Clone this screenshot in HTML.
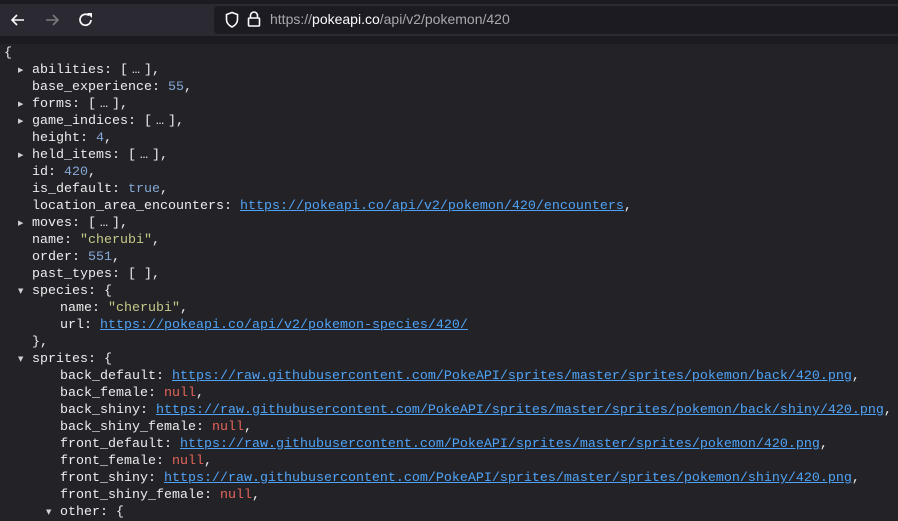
<!DOCTYPE html>
<html><head><meta charset="utf-8"><style>
*{margin:0;padding:0;box-sizing:border-box}
body{width:898px;height:513px;overflow:hidden;background:#232327;font-family:"Liberation Sans",sans-serif}
.top{position:absolute;left:0;top:0;width:898px;height:4px;background:#1c1b22}
.bar{position:absolute;left:0;top:4px;width:898px;height:32px;background:#2b2a33}
.sep{position:absolute;left:0;top:36px;width:898px;height:8px;background:#1c1b22}
.url{position:absolute;left:214px;top:6px;width:690px;height:28px;background:#1c1b22;border-radius:4px}
.urltext{position:absolute;left:270px;top:11px;font-size:14px;color:#a8a8ad}
.urltext b{font-weight:normal;color:#fbfbfe}
.code{position:absolute;left:0;top:45px;font-family:"Liberation Mono",monospace;font-size:13.33px;color:#ededf0}
.l{position:absolute;height:17px;line-height:17px;white-space:pre}
.n{color:#86a8d6}.s{color:#c7c98a}.nl{color:#e5645a}.a{color:#4fa3f7;text-decoration:underline}
.t{position:absolute;font-size:7px;color:#cfcfd4;font-family:"DejaVu Sans",sans-serif}
.h{letter-spacing:-4px}
</style></head><body>
<div class="top"></div><div class="bar"></div><div class="sep"></div>
<svg style="position:absolute;left:8px;top:10px" width="20" height="20" viewBox="0 0 20 20"><path d="M16 10H4M9 5L4 10L9 15" stroke="#fbfbfe" stroke-width="1.6" fill="none"/></svg>
<svg style="position:absolute;left:42px;top:10px" width="20" height="20" viewBox="0 0 20 20"><path d="M4 10H16M11 5L16 10L11 15" stroke="#7a7a80" stroke-width="1.6" fill="none"/></svg>
<svg style="position:absolute;left:76px;top:10px" width="20" height="20" viewBox="0 0 20 20"><path d="M15 10A5.5 5.5 0 1 1 13 5.5" stroke="#fbfbfe" stroke-width="1.7" fill="none"/><path d="M11 3H16V8Z" fill="#fbfbfe"/></svg>
<div class="url"></div>
<svg style="position:absolute;left:224px;top:11px" width="16" height="18" viewBox="0 0 16 18"><path d="M8 1.5L2.5 3.5V8.5C2.5 12 5 14.5 8 16C11 14.5 13.5 12 13.5 8.5V3.5Z" stroke="#fbfbfe" stroke-width="1.6" fill="none"/></svg>
<svg style="position:absolute;left:246px;top:10px" width="16" height="18" viewBox="0 0 16 18"><path d="M4.5 8V5.5A3.5 3.5 0 0 1 11.5 5.5V8" stroke="#fbfbfe" stroke-width="1.6" fill="none"/><rect x="2.5" y="8" width="11" height="8" rx="1" stroke="#fbfbfe" stroke-width="1.6" fill="none"/></svg>
<div class="urltext">https://<b>pokeapi.co</b>/api/v2/pokemon/420</div>
<div class="code">
<div class="l" style="left:4px;top:0">{</div>
<div class="t" style="left:18px;top:21px">▶</div><div class="l" style="left:32px;top:17px">abilities: [<span class="h"> </span>…<span class="h"> </span>],</div>
<div class="l" style="left:32px;top:34px">base_experience: <span class="n">55</span>,</div>
<div class="t" style="left:18px;top:55px">▶</div><div class="l" style="left:32px;top:51px">forms: [<span class="h"> </span>…<span class="h"> </span>],</div>
<div class="t" style="left:18px;top:72px">▶</div><div class="l" style="left:32px;top:68px">game_indices: [<span class="h"> </span>…<span class="h"> </span>],</div>
<div class="l" style="left:32px;top:85px">height: <span class="n">4</span>,</div>
<div class="t" style="left:18px;top:106px">▶</div><div class="l" style="left:32px;top:102px">held_items: [<span class="h"> </span>…<span class="h"> </span>],</div>
<div class="l" style="left:32px;top:119px">id: <span class="n">420</span>,</div>
<div class="l" style="left:32px;top:136px">is_default: <span class="n">true</span>,</div>
<div class="l" style="left:32px;top:153px">location_area_encounters: <span class="a">https://pokeapi.co/api/v2/pokemon/420/encounters</span>,</div>
<div class="t" style="left:18px;top:174px">▶</div><div class="l" style="left:32px;top:170px">moves: [<span class="h"> </span>…<span class="h"> </span>],</div>
<div class="l" style="left:32px;top:187px">name: <span class="s">"cherubi"</span>,</div>
<div class="l" style="left:32px;top:204px">order: <span class="n">551</span>,</div>
<div class="l" style="left:32px;top:221px">past_types: [ ],</div>
<div class="t" style="left:18px;top:242px">▼</div><div class="l" style="left:32px;top:238px">species: {</div>
<div class="l" style="left:60px;top:255px">name: <span class="s">"cherubi"</span>,</div>
<div class="l" style="left:60px;top:272px">url: <span class="a">https://pokeapi.co/api/v2/pokemon-species/420/</span></div>
<div class="l" style="left:32px;top:289px">},</div>
<div class="t" style="left:18px;top:310px">▼</div><div class="l" style="left:32px;top:306px">sprites: {</div>
<div class="l" style="left:60px;top:323px">back_default: <span class="a">https://raw.githubusercontent.com/PokeAPI/sprites/master/sprites/pokemon/back/420.png</span>,</div>
<div class="l" style="left:60px;top:340px">back_female: <span class="nl">null</span>,</div>
<div class="l" style="left:60px;top:357px">back_shiny: <span class="a">https://raw.githubusercontent.com/PokeAPI/sprites/master/sprites/pokemon/back/shiny/420.png</span>,</div>
<div class="l" style="left:60px;top:374px">back_shiny_female: <span class="nl">null</span>,</div>
<div class="l" style="left:60px;top:391px">front_default: <span class="a">https://raw.githubusercontent.com/PokeAPI/sprites/master/sprites/pokemon/420.png</span>,</div>
<div class="l" style="left:60px;top:408px">front_female: <span class="nl">null</span>,</div>
<div class="l" style="left:60px;top:425px">front_shiny: <span class="a">https://raw.githubusercontent.com/PokeAPI/sprites/master/sprites/pokemon/shiny/420.png</span>,</div>
<div class="l" style="left:60px;top:442px">front_shiny_female: <span class="nl">null</span>,</div>
<div class="t" style="left:46px;top:463px">▼</div><div class="l" style="left:60px;top:459px">other: {</div>
</div>
</body></html>
